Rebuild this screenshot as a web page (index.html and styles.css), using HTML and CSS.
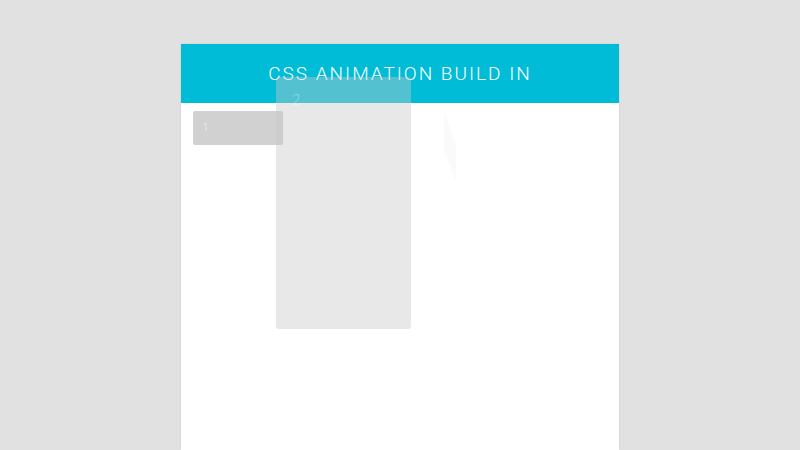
FILE: index.html
```
<!DOCTYPE html>
<html lang="en">
<head>
    <meta charset="UTF-8">
    <meta name="viewport" content="width=device-width, initial-scale=1.0">
    <title>CSS Animation Build In</title>
    <link rel="stylesheet" href="styles.css">
</head>
<body>

<main class="page">
    <header class="header">
        <h1 class="title">CSS Animation Build In</h1>
    </header>
    <div class="grid">
        <div class="cell">
            <div class="card">1</div>
        </div>
        <div class="cell">
            <div class="card card-rising">2</div>
        </div>
        <div class="cell">
            <div class="card-turning"></div>
        </div>
    </div>
</main>

</body>
</html>
```
FILE: styles.css
```
* {
    box-sizing: border-box;
}
body {
    display: flex;
    flex-direction: column;
    min-height: 100vh;
    margin: 0;
    padding: 44px 16px 0;
    background-color: #e1e1e1;
    font-family: "Roboto Slab", Roboto, sans-serif;
    font-weight: 300;
}
.page {
    flex: 1;
    width: 100%;
    max-width: 438px;
    margin: 0 auto;
    background-color: #fff;
    box-shadow: 0 0 2px rgba(0, 0, 0, 0.1);
}
.header {
    padding: 16px;
    background-color: #00bcd6;
    color: #fff;
    text-align: center;
}
.title {
    margin: 0;
    font-size: 19px;
    font-weight: 300;
    line-height: 27px;
    letter-spacing: 2px;
    text-transform: uppercase;
}
.grid {
    display: grid;
    grid-template-columns: repeat(4, 1fr);
    gap: 16px;
    padding: 8px 18px 8px 12px;
}
.cell {
    position: relative;
}
.card {
    padding: 10px;
    border-radius: 2px;
    background-color: #d1d1d1;
    color: #f0f0f0;
    font-size: 10px;
    line-height: 14px;
}
/* card 2 is still enlarged and see-through */
.card-rising {
    position: absolute;
    top: -34px;
    left: -23px;
    width: 150%;
    height: 252px;
    padding: 14px 16px;
    border-radius: 3px;
    background-color: rgba(200, 200, 200, 0.42);
    color: rgba(255, 255, 255, 0.35);
    font-size: 15px;
    line-height: 18px;
}
/* card 3 is almost edge-on */
.card-turning {
    width: 12px;
    height: 70px;
    margin: 0 auto;
    background-color: #fafafa;
    clip-path: polygon(0 0, 100% 50%, 100% 100%, 0 57%);
}
```
